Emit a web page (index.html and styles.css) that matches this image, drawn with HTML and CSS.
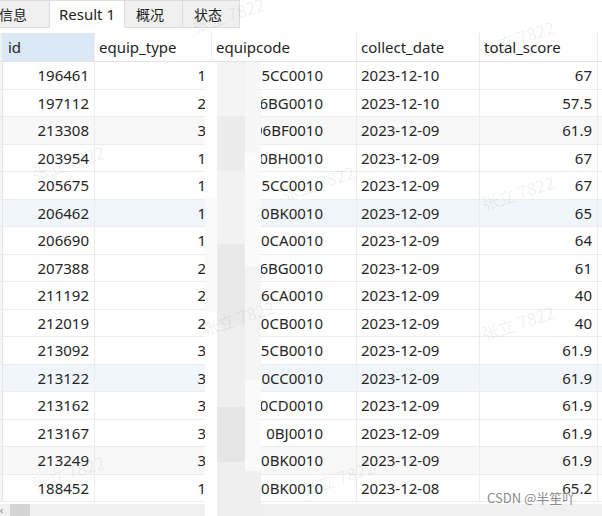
FILE: index.html
```html
<!DOCTYPE html>
<html>
<head>
<meta charset="utf-8">
<link rel="stylesheet" href="styles.css">
</head>
<body>
<div class="app">
  <div class="tabs">
    <div class="tab first">信息</div>
    <div class="tab active">Result 1</div>
    <div class="tab">概况</div>
    <div class="tab">状态</div>
  </div>
  <div class="grid">
    <div class="row head">
      <div class="ind"></div>
      <div class="c sel">id</div>
      <div class="c">equip_type</div>
      <div class="c">equipcode</div>
      <div class="c">collect_date</div>
      <div class="c">total_score</div>
    </div>
    <div class="row"><div class="ind"></div><div class="c r">196461</div><div class="c r">1</div><div class="c code">5CC0010</div><div class="c">2023-12-10</div><div class="c r">67</div></div>
    <div class="row"><div class="ind"></div><div class="c r">197112</div><div class="c r">2</div><div class="c code">6BG0010</div><div class="c">2023-12-10</div><div class="c r">57.5</div></div>
    <div class="row alt"><div class="ind"></div><div class="c r">213308</div><div class="c r">3</div><div class="c code">96BF0010</div><div class="c">2023-12-09</div><div class="c r">61.9</div></div>
    <div class="row"><div class="ind"></div><div class="c r">203954</div><div class="c r">1</div><div class="c code">0BH0010</div><div class="c">2023-12-09</div><div class="c r">67</div></div>
    <div class="row"><div class="ind"></div><div class="c r">205675</div><div class="c r">1</div><div class="c code">5CC0010</div><div class="c">2023-12-09</div><div class="c r">67</div></div>
    <div class="row hl"><div class="ind"></div><div class="c r">206462</div><div class="c r">1</div><div class="c code">0BK0010</div><div class="c">2023-12-09</div><div class="c r">65</div></div>
    <div class="row"><div class="ind"></div><div class="c r">206690</div><div class="c r">1</div><div class="c code">0CA0010</div><div class="c">2023-12-09</div><div class="c r">64</div></div>
    <div class="row"><div class="ind"></div><div class="c r">207388</div><div class="c r">2</div><div class="c code">6BG0010</div><div class="c">2023-12-09</div><div class="c r">61</div></div>
    <div class="row"><div class="ind"></div><div class="c r">211192</div><div class="c r">2</div><div class="c code">6CA0010</div><div class="c">2023-12-09</div><div class="c r">40</div></div>
    <div class="row"><div class="ind"></div><div class="c r">212019</div><div class="c r">2</div><div class="c code">0CB0010</div><div class="c">2023-12-09</div><div class="c r">40</div></div>
    <div class="row"><div class="ind"></div><div class="c r">213092</div><div class="c r">3</div><div class="c code">5CB0010</div><div class="c">2023-12-09</div><div class="c r">61.9</div></div>
    <div class="row hl"><div class="ind"></div><div class="c r">213122</div><div class="c r">3</div><div class="c code">0CC0010</div><div class="c">2023-12-09</div><div class="c r">61.9</div></div>
    <div class="row"><div class="ind"></div><div class="c r">213162</div><div class="c r">3</div><div class="c code">0CD0010</div><div class="c">2023-12-09</div><div class="c r">61.9</div></div>
    <div class="row"><div class="ind"></div><div class="c r">213167</div><div class="c r">3</div><div class="c code">0BJ0010</div><div class="c">2023-12-09</div><div class="c r">61.9</div></div>
    <div class="row alt"><div class="ind"></div><div class="c r">213249</div><div class="c r">3</div><div class="c code">0BK0010</div><div class="c">2023-12-09</div><div class="c r">61.9</div></div>
    <div class="row"><div class="ind"></div><div class="c r">188452</div><div class="c r">1</div><div class="c code">0BK0010</div><div class="c">2023-12-08</div><div class="c r">65.2</div></div>
  </div>
  <div class="scrollbar"><span class="arrow">‹</span><span class="thumb"></span></div>

  <div class="mosaic">
    <div class="mcol m1"></div>
    <div class="mcol m2"></div>
    <div class="mcol m3"></div>
  </div>

  <div class="wm w1">张立 7822</div>
  <div class="wm w2">张立 7822</div>
  <div class="wm w3">张立 7822</div>
  <div class="wm w4">张立 7822</div>
  <div class="wm w5">张立 7822</div>
  <div class="wm w6">张立 7822</div>
  <div class="wm w7">张立 7822</div>
  <div class="wm w8">张立 7822</div>
  <div class="wm w9">张立 7822</div>

  <div class="csdn">CSDN @半笙吖</div>
</div>
</body>
</html>
```
FILE: styles.css
```css
html, body {
  margin: 0;
  padding: 0;
  background: #ffffff;
}
.app {
  position: relative;
  width: 602px;
  height: 516px;
  overflow: hidden;
  font-family: "Noto Sans", "Noto Sans CJK SC", sans-serif;
  font-size: 15px;
  color: #262626;
}
.tabs {
  display: flex;
  height: 28px;
  margin-bottom: 5px;
}
.tab {
  box-sizing: border-box;
  height: 28px;
  line-height: 26px;
  padding: 0 12px;
  background: #f0f0f0;
  border: 1px solid #dcdcdc;
  border-left: none;
  font-family: "Noto Sans CJK SC", sans-serif;
  font-size: 14px;
  color: #222;
}
.tab.first {
  width: 50px;
  padding: 0 0 0 0;
  text-indent: -1px;
}
.tab.active {
  width: 75px;
  background: #ffffff;
  border-bottom-color: #ffffff;
  padding: 0 0 0 9px;
  font-family: "Noto Sans", sans-serif;
  font-size: 15px;
  line-height: 27px;
}
.tab:nth-child(3) { width: 58px; padding-left: 11px; }
.tab:nth-child(4) { width: 57px; padding-left: 11px; }

.grid {
  display: flex;
  flex-direction: column;
}
.row {
  display: grid;
  grid-template-columns: 3px 92px 117px 145px 123px 118px;
  height: 27.5px;
  box-sizing: border-box;
  border-bottom: 1px solid #ececec;
}
.row.head {
  height: 29px;
  border-bottom: 1px solid #e3e3e3;
}
.row.alt { background: #f8f8f8; }
.row.hl { background: #f1f6fc; }
.ind {
  background: #f3f6f9;
  border-right: 1px solid #e4e4e4;
}
.head .ind { background: #eef3f8; }
.c {
  box-sizing: border-box;
  padding: 0 5px 0 4px;
  line-height: 26px;
  white-space: nowrap;
  overflow: hidden;
  border-right: 1px solid #ececec;
}
.head .c {
  line-height: 28px;
  color: #1f1f1f;
}
.head .c.sel {
  background: #dbe9f7;
  padding-left: 5px;
}
.c.r { text-align: right; }
.c.code {
  text-align: right;
  padding-right: 33px;
}

.scrollbar {
  position: absolute;
  left: 0;
  bottom: 0;
  width: 602px;
  height: 12px;
  background: #f0f0f0;
  display: flex;
  align-items: center;
}
.scrollbar .arrow {
  width: 10px;
  font-size: 10px;
  color: #777;
  line-height: 12px;
}
.scrollbar .thumb {
  width: 20px;
  height: 12px;
  background: #d4d4d4;
}

.mosaic {
  position: absolute;
  left: 205px;
  top: 62px;
  width: 56px;
  height: 454px;
  display: flex;
}
.mcol { height: 100%; }
.m1 {
  width: 12px;
  background: linear-gradient(#ffffff 0 30%, #fafafa 30% 55%, #ffffff 55% 100%);
}
.m2 {
  width: 28px;
  background: linear-gradient(#f4f4f4 0 12%, #ececec 12% 24%, #f2f2f2 24% 40%, #e9e9e9 40% 58%, #efefef 58% 76%, #e6e6e6 76% 88%, #efefef 88% 100%);
}
.m3 {
  width: 16px;
  background: linear-gradient(#f7f7f7 0 20%, #fbfbfb 20% 45%, #f5f5f5 45% 70%, #fafafa 70% 90%, #efefef 90% 100%);
}

.wm {
  position: absolute;
  font-family: "Noto Sans CJK SC", sans-serif;
  font-size: 17px;
  color: rgba(0, 0, 0, 0.07);
  transform: rotate(-18deg);
  white-space: nowrap;
  pointer-events: none;
}
.w1 { left: 190px; top: 2px; }
.w2 { left: 480px; top: 25px; }
.w3 { left: 30px; top: 150px; }
.w4 { left: 280px; top: 170px; }
.w5 { left: 480px; top: 180px; }
.w6 { left: 200px; top: 305px; }
.w7 { left: 480px; top: 310px; }
.w8 { left: 30px; top: 460px; }
.w9 { left: 300px; top: 465px; }

.csdn {
  position: absolute;
  left: 487px;
  top: 488px;
  font-family: "Noto Sans CJK SC", sans-serif;
  font-size: 13px;
  color: #8a8a8a;
  text-shadow: 0 0 2px #ffffff;
}
```
